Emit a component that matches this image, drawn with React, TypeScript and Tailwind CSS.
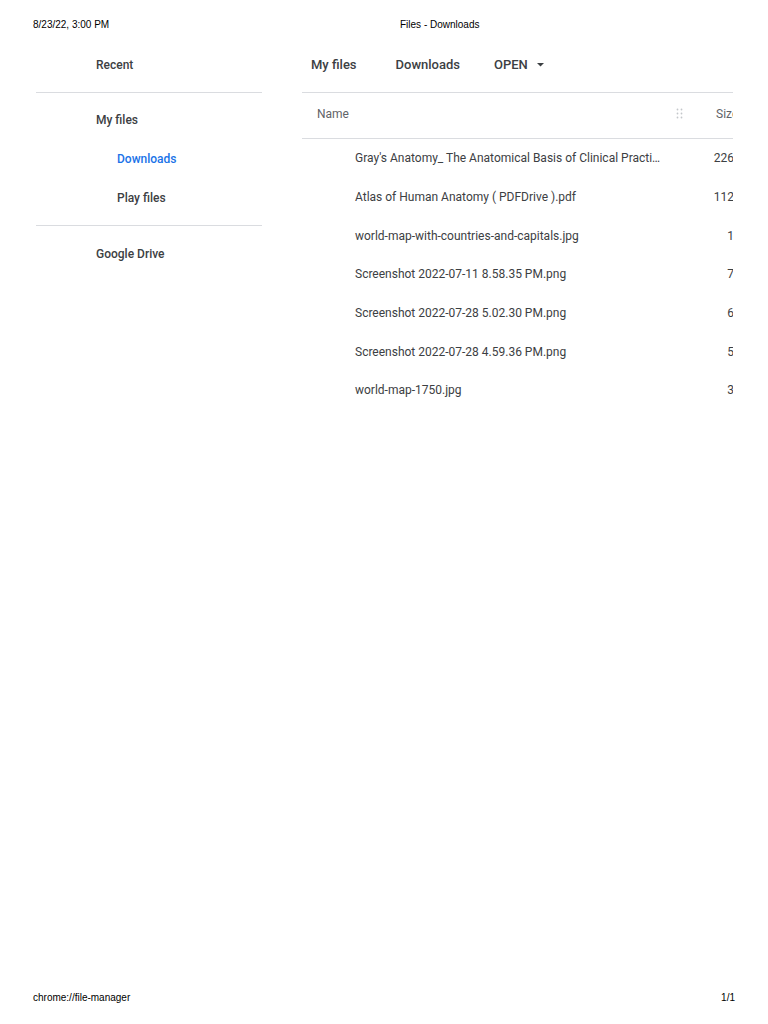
import React from "react";

const files = [
  { name: "Gray's Anatomy_ The Anatomical Basis of Clinical Practi…", size: "226 MB" },
  { name: "Atlas of Human Anatomy ( PDFDrive ).pdf", size: "112 MB" },
  { name: "world-map-with-countries-and-capitals.jpg", size: "1 MB" },
  { name: "Screenshot 2022-07-11 8.58.35 PM.png", size: "7 MB" },
  { name: "Screenshot 2022-07-28 5.02.30 PM.png", size: "6 MB" },
  { name: "Screenshot 2022-07-28 4.59.36 PM.png", size: "5 MB" },
  { name: "world-map-1750.jpg", size: "3 MB" },
];

function Dots() {
  return (
    <svg width="8" height="12" viewBox="0 0 8 12" className="block">
      {[0, 1, 2].map((i) => (
        <g key={i}>
          <circle cx="1.5" cy={1.5 + i * 4} r="0.9" fill="#c4c7cb" />
          <circle cx="5.5" cy={1.5 + i * 4} r="0.9" fill="#c4c7cb" />
        </g>
      ))}
    </svg>
  );
}

export default function App() {
  return (
    <div
      className="flex h-[1024px] w-[768px] flex-col bg-white text-[#202124]"
      style={{ fontFamily: "Roboto, 'Noto Sans', sans-serif" }}
    >
      <div
        className="flex h-[41px] shrink-0 pt-[19px] text-[10px] leading-[12px] text-black"
        style={{ fontFamily: "'Liberation Sans', Arial, sans-serif" }}
      >
        <div className="w-[400px] pl-[33px]">8/23/22, 3:00 PM</div>
        <div>Files - Downloads</div>
      </div>

      <div className="flex flex-1">
        {/* Sidebar */}
        <div className="ml-[36px] w-[226px] shrink-0">
          <div className="flex h-[48px] items-center pl-[60px] text-[12px] font-medium text-[#3c4043]">
            Recent
          </div>
          <div className="mt-[3px] border-t border-[#dadce0]" />
          <div className="py-[7px]">
            <div className="flex h-[39px] items-center pl-[60px] text-[12px] font-medium text-[#3c4043]">
              My files
            </div>
            <div className="flex h-[39px] items-center pl-[81px] text-[12px] font-medium text-[#1a73e8]">
              Downloads
            </div>
            <div className="flex h-[39px] items-center pl-[81px] text-[12px] font-medium text-[#3c4043]">
              Play files
            </div>
          </div>
          <div className="mt-[1px] border-t border-[#dadce0]" />
          <div className="flex h-[56px] items-center pl-[60px] text-[12px] font-medium text-[#3c4043]">
            Google Drive
          </div>
        </div>

        {/* Main */}
        <div className="ml-[40px] w-[431px] shrink-0 overflow-hidden">
          <div className="flex h-[48px] items-center text-[13px] font-medium text-[#3c4043]">
            <span className="ml-[9px]">My files</span>
            <span className="ml-[39px]">Downloads</span>
            <span className="ml-[34px]">OPEN</span>
            <svg width="7" height="4" viewBox="0 0 7 4" className="ml-[9px]">
              <path d="M0 0 L7 0 L3.5 3.5 Z" fill="#3c4043" />
            </svg>
          </div>
          <div className="mt-[3px] border-t border-[#dadce0]" />
          <div className="w-[470px]">
            <div className="flex h-[45px] items-center pb-[3px] text-[12px] text-[#5f6368]">
              <div className="w-[374px] pl-[15px]">Name</div>
              <div className="w-[10px]">
                <Dots />
              </div>
              <div className="pl-[30px]">Size</div>
            </div>
          </div>
          <div className="border-t border-[#dadce0]" />
          <div className="w-[470px]">
            {files.map((f) => (
              <div key={f.name} className="flex h-[38.67px] items-center text-[12px] text-[#3c4043]">
                <div className="w-[384px] whitespace-nowrap pl-[53px]">{f.name}</div>
                <div className="w-[69px] whitespace-nowrap text-right">{f.size}</div>
              </div>
            ))}
          </div>
        </div>
      </div>

      <div
        className="flex h-[39px] shrink-0 justify-between px-[33px] pt-[7px] text-[10px] leading-[12px] text-black"
        style={{ fontFamily: "'Liberation Sans', Arial, sans-serif" }}
      >
        <div>chrome://file-manager</div>
        <div>1/1</div>
      </div>
    </div>
  );
}
